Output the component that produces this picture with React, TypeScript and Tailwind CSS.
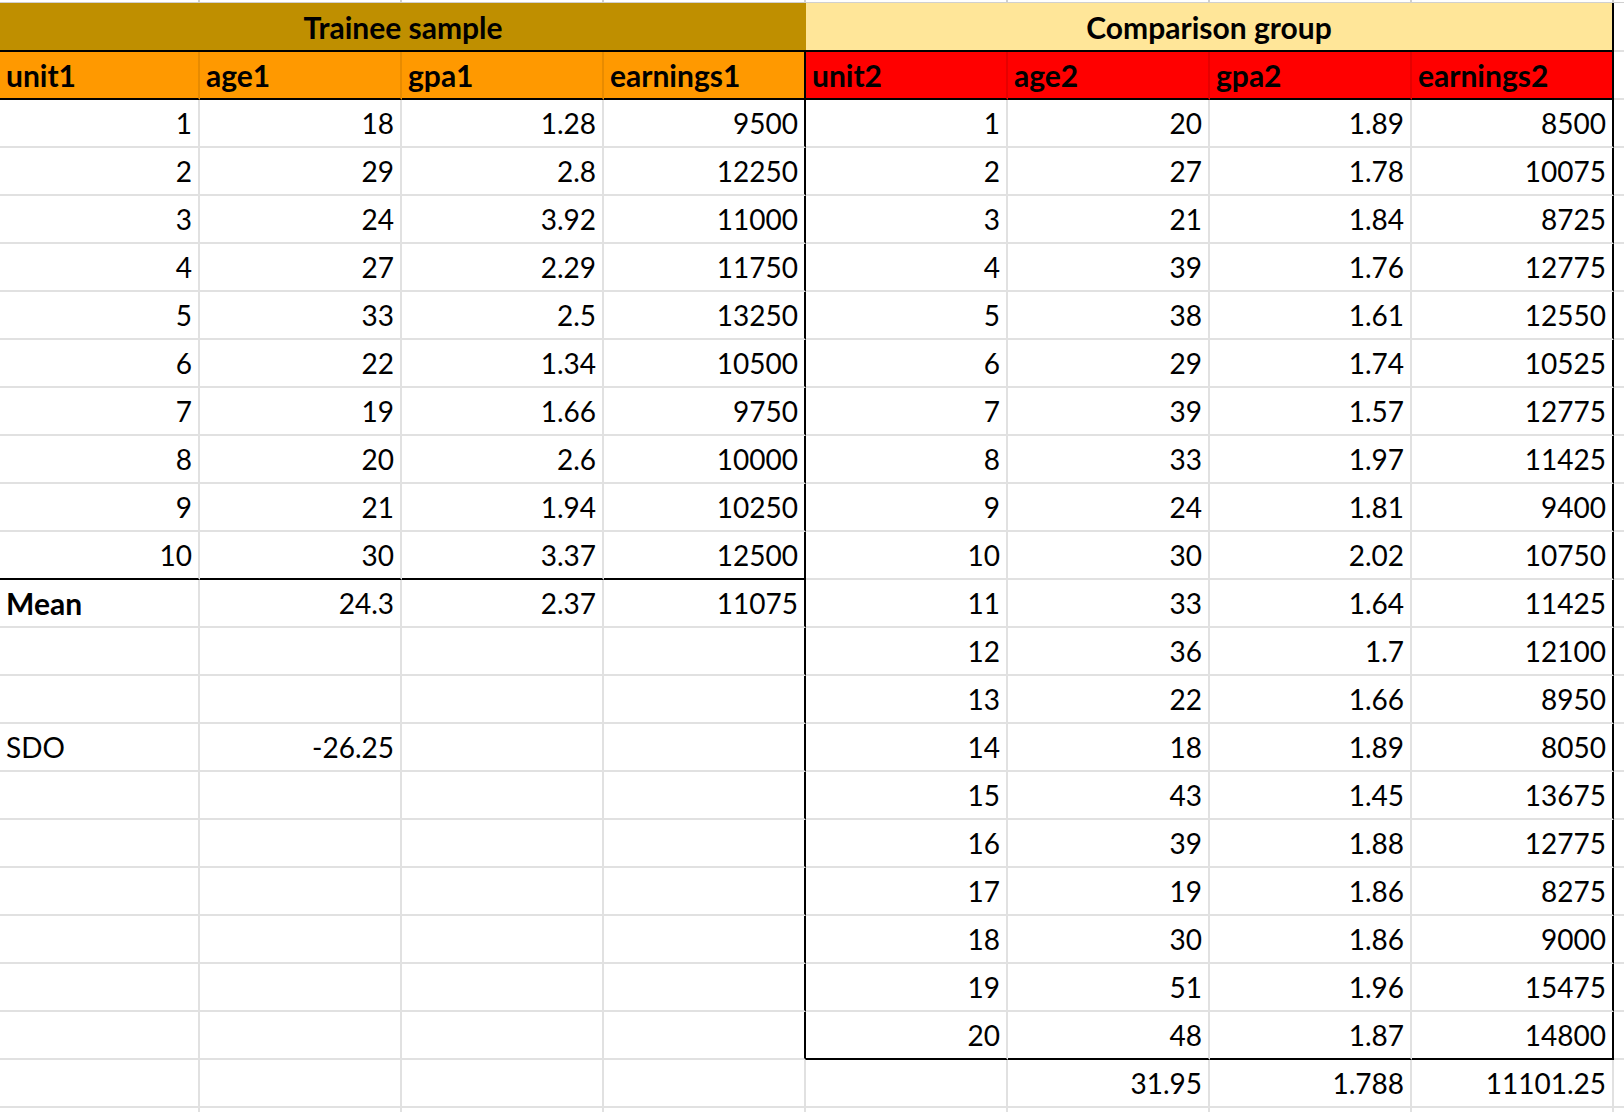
import React from "react";

const trainee = [
  [1, 18, 1.28, 9500],
  [2, 29, 2.8, 12250],
  [3, 24, 3.92, 11000],
  [4, 27, 2.29, 11750],
  [5, 33, 2.5, 13250],
  [6, 22, 1.34, 10500],
  [7, 19, 1.66, 9750],
  [8, 20, 2.6, 10000],
  [9, 21, 1.94, 10250],
  [10, 30, 3.37, 12500],
];

const comparison = [
  [1, 20, 1.89, 8500],
  [2, 27, 1.78, 10075],
  [3, 21, 1.84, 8725],
  [4, 39, 1.76, 12775],
  [5, 38, 1.61, 12550],
  [6, 29, 1.74, 10525],
  [7, 39, 1.57, 12775],
  [8, 33, 1.97, 11425],
  [9, 24, 1.81, 9400],
  [10, 30, 2.02, 10750],
  [11, 33, 1.64, 11425],
  [12, 36, 1.7, 12100],
  [13, 22, 1.66, 8950],
  [14, 18, 1.89, 8050],
  [15, 43, 1.45, 13675],
  [16, 39, 1.88, 12775],
  [17, 19, 1.86, 8275],
  [18, 30, 1.86, 9000],
  [19, 51, 1.96, 15475],
  [20, 48, 1.87, 14800],
];

type Cell = { text?: string; bold?: boolean; left?: boolean };

const gridCols = "grid grid-cols-[200px_repeat(7,202px)_1fr]";

function DataRow({ index }: { index: number }) {
  // index 0..21 : rows below the two header rows
  const left: Cell[] = [{}, {}, {}, {}];
  if (index < 10) {
    trainee[index].forEach((v, i) => (left[i] = { text: String(v) }));
  } else if (index === 10) {
    left[0] = { text: "Mean", bold: true, left: true };
    left[1] = { text: "24.3" };
    left[2] = { text: "2.37" };
    left[3] = { text: "11075" };
  } else if (index === 13) {
    left[0] = { text: "SDO", left: true };
    left[1] = { text: "-26.25" };
  }

  const right: Cell[] = [{}, {}, {}, {}];
  if (index < 20) {
    comparison[index].forEach((v, i) => (right[i] = { text: String(v) }));
  } else if (index === 20) {
    right[1] = { text: "31.95" };
    right[2] = { text: "1.788" };
    right[3] = { text: "11101.25" };
  }

  const inBox = index < 20;
  const leftBottomBlack = index === 9;
  const rightBottomBlack = index === 19;

  return (
    <div className={`${gridCols} h-[48px]`}>
      {left.map((c, i) => (
        <div
          key={i}
          className={`flex items-center border-r-2 border-b-2 ${
            c.left ? "justify-start pl-[6px]" : "justify-end pr-[6px]"
          } ${c.bold ? "font-bold text-[30px]" : "font-normal"} ${
            leftBottomBlack ? "border-b-black" : "border-b-[#e1e1e1]"
          } ${i === 3 && inBox ? "border-r-black" : "border-r-[#e1e1e1]"}`}
        >
          {c.text}
        </div>
      ))}
      {right.map((c, i) => (
        <div
          key={i}
          className={`flex items-center justify-end pr-[6px] border-r-2 border-b-2 ${
            rightBottomBlack ? "border-b-black" : "border-b-[#e1e1e1]"
          } ${i === 3 && inBox ? "border-r-black" : "border-r-[#e1e1e1]"}`}
        >
          {c.text}
        </div>
      ))}
      <div className="border-b-2 border-[#e1e1e1]" />
    </div>
  );
}

export default function App() {
  const headers1 = ["unit1", "age1", "gpa1", "earnings1"];
  const headers2 = ["unit2", "age2", "gpa2", "earnings2"];

  return (
    <div className="w-[1624px] h-[1112px] overflow-hidden bg-white text-black text-[28px] leading-none font-['Lato',sans-serif]">
      {/* sliver of the row above */}
      <div className={`${gridCols} h-[3px]`}>
        {Array.from({ length: 8 }).map((_, i) => (
          <div key={i} className="border-r-2 border-b border-[#d0d0d0]" />
        ))}
        <div className="border-b border-[#d0d0d0]" />
      </div>

      {/* group titles */}
      <div className="grid grid-cols-[806px_808px_1fr] h-[49px] text-[30px]">
        <div className="flex items-center justify-center bg-[#bf8f00] border-b-2 border-black font-bold">
          Trainee sample
        </div>
        <div className="flex items-center justify-center bg-[#ffe699] border-b-2 border-r-2 border-black font-bold">
          Comparison group
        </div>
        <div className="border-b-2 border-[#e1e1e1]" />
      </div>

      {/* column names */}
      <div className={`${gridCols} h-[48px] text-[30px]`}>
        {headers1.map((h, i) => (
          <div
            key={h}
            className={`flex items-center pl-[6px] bg-[#ff9900] font-bold border-b-2 border-b-black border-r-2 ${
              i === 3 ? "border-r-black" : "border-r-[#e88b00]"
            }`}
          >
            {h}
          </div>
        ))}
        {headers2.map((h, i) => (
          <div
            key={h}
            className={`flex items-center pl-[6px] bg-[#ff0000] font-bold border-b-2 border-b-black border-r-2 ${
              i === 3 ? "border-r-black" : "border-r-[#e60000]"
            }`}
          >
            {h}
          </div>
        ))}
        <div className="border-b-2 border-[#e1e1e1]" />
      </div>

      {Array.from({ length: 22 }).map((_, i) => (
        <DataRow key={i} index={i} />
      ))}
    </div>
  );
}
